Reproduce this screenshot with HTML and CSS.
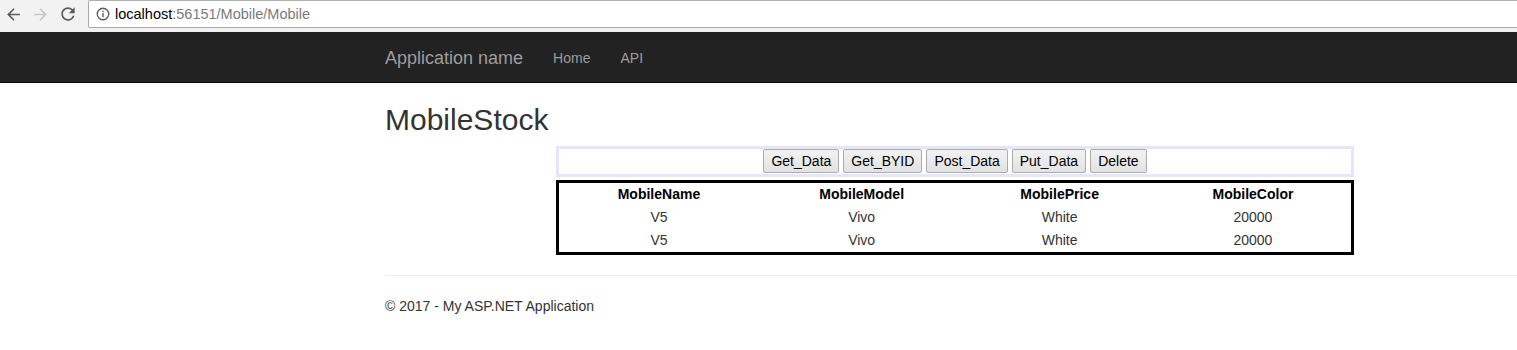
FILE: index.html
```html
<!DOCTYPE html>
<html lang="en">
<head>
    <meta charset="UTF-8">
    <title>MobileStock - My ASP.NET Application</title>
    <link rel="stylesheet" href="styles.css">
</head>
<body>
    <!-- browser toolbar -->
    <div class="chrome">
        <div class="chrome-nav">
            <svg class="chrome-icon" viewBox="0 0 24 24" width="19" height="19"><path d="M20 11H7.83l5.59-5.59L12 4l-8 8 8 8 1.41-1.41L7.83 13H20v-2z" fill="#5a5a5a"/></svg>
            <svg class="chrome-icon" viewBox="0 0 24 24" width="19" height="19"><path d="M4 11h12.17l-5.59-5.59L12 4l8 8-8 8-1.41-1.41L16.17 13H4v-2z" fill="#c6c6c6"/></svg>
            <svg class="chrome-icon" viewBox="0 0 24 24" width="20" height="20"><path d="M17.65 6.35A7.958 7.958 0 0 0 12 4c-4.42 0-7.99 3.58-7.99 8s3.57 8 7.99 8c3.73 0 6.84-2.55 7.730-6h-2.08A5.99 5.990 0 0 1 12 18c-3.31 0-6-2.69-6-6s2.69-6 6-6c1.66 0 3.14.69 4.22 1.78L13 11h7V4l-2.35 2.35z" fill="#5a5a5a"/></svg>
        </div>
        <div class="omnibox">
            <svg class="info-icon" viewBox="0 0 16 16" width="14" height="14">
                <circle cx="8" cy="8" r="6.6" fill="none" stroke="#5a5a5a" stroke-width="1.5"/>
                <rect x="7.2" y="7" width="1.6" height="4.6" fill="#5a5a5a"/>
                <rect x="7.2" y="4.2" width="1.6" height="1.6" fill="#5a5a5a"/>
            </svg>
            <span class="host">localhost</span><span class="path">:56151/Mobile/Mobile</span>
        </div>
    </div>

    <div class="navbar">
        <div class="container navbar-inner">
            <a class="navbar-brand" href="#">Application name</a>
            <ul class="nav">
                <li><a href="#">Home</a></li>
                <li><a href="#">API</a></li>
            </ul>
        </div>
    </div>

    <div class="container body-content">
        <h2>MobileStock</h2>

        <div class="actions">
            <button type="button">Get_Data</button>
            <button type="button">Get_BYID</button>
            <button type="button">Post_Data</button>
            <button type="button">Put_Data</button>
            <button type="button">Delete</button>
        </div>

        <table class="stock">
            <thead>
                <tr>
                    <th>MobileName</th>
                    <th>MobileModel</th>
                    <th>MobilePrice</th>
                    <th>MobileColor</th>
                </tr>
            </thead>
            <tbody>
                <tr>
                    <td>V5</td>
                    <td>Vivo</td>
                    <td>White</td>
                    <td>20000</td>
                </tr>
                <tr>
                    <td>V5</td>
                    <td>Vivo</td>
                    <td>White</td>
                    <td>20000</td>
                </tr>
            </tbody>
        </table>

        <hr>
        <footer>
            <p>&copy; 2017 - My ASP.NET Application</p>
        </footer>
    </div>
</body>
</html>
```

FILE: styles.css
```css
:root {
    --text-color: #333;
    --nav-bg: #222;
    --nav-link: #9d9d9d;
    --panel-border: #e6e6fa;
}

html, body {
    overflow: hidden;
}

body {
    margin: 0;
    font-family: "Liberation Sans", Arial, sans-serif;
    font-size: 14px;
    line-height: 20px;
    color: var(--text-color);
    background: #fff;
}

/* browser toolbar */
.chrome {
    display: flex;
    height: 32px;
    background: #f2f2f2;
}

.chrome-nav {
    display: flex;
    align-items: center;
    gap: 8px;
    width: 88px;
    padding: 0 0 4px 4px;
    box-sizing: border-box;
}

.omnibox {
    display: flex;
    align-items: center;
    flex: 1;
    height: 26px;
    margin-right: -10px;
    padding-left: 7px;
    background: #fff;
    border: 1px solid #a9a9a9;
    border-top-color: #b0b0b0;
    border-radius: 2px;
    font-family: "Liberation Sans", Arial, sans-serif;
    font-size: 14.5px;
}

.info-icon {
    margin-right: 5px;
}

.host {
    color: #000;
}

.path {
    color: #7a7a7a;
}

/* site navbar */
.container {
    width: 1140px;
    margin-left: 370px;
    padding: 0 15px;
}

.navbar {
    background: var(--nav-bg);
    border-bottom: 1px solid #080808;
    height: 50px;
}

.navbar-inner {
    display: flex;
}

.navbar-brand {
    margin-left: -15px;
    padding: 16px 15px 14px;
    font-size: 18px;
    line-height: 20px;
    color: var(--nav-link);
    text-decoration: none;
}

.nav {
    display: flex;
    margin: 0;
    padding: 0;
    list-style: none;
}

.nav a {
    display: block;
    padding: 16px 15px 14px;
    color: var(--nav-link);
    text-decoration: none;
}

/* page body */
h2 {
    margin: 20px 0 10px;
    font-size: 30px;
    font-weight: 500;
    line-height: 33px;
}

.actions {
    display: flex;
    justify-content: center;
    gap: 4px;
    width: 70%;
    margin: 0 auto 3px;
    padding: 0 0 1px;
    border: 3px solid var(--panel-border);
    box-sizing: border-box;
}

.actions button {
    padding: 1px 7px;
    font: inherit;
    color: #000;
    background: linear-gradient(#f2f2f2, #e2e2e2);
    border: 1px solid #acacac;
    border-radius: 2px;
}

.stock {
    width: 70%;
    margin: 0 auto;
    border: 3px solid #000;
    border-spacing: 0;
    box-sizing: border-box;
}

.stock th,
.stock td {
    padding: 1px 0;
    line-height: 21px;
    text-align: center;
}

.stock th {
    color: #000;
}

hr {
    margin: 20px -30px 20px 0;
    border: 0;
    border-top: 1px solid #eee;
}

footer p {
    margin: 0 0 10px;
}
```
